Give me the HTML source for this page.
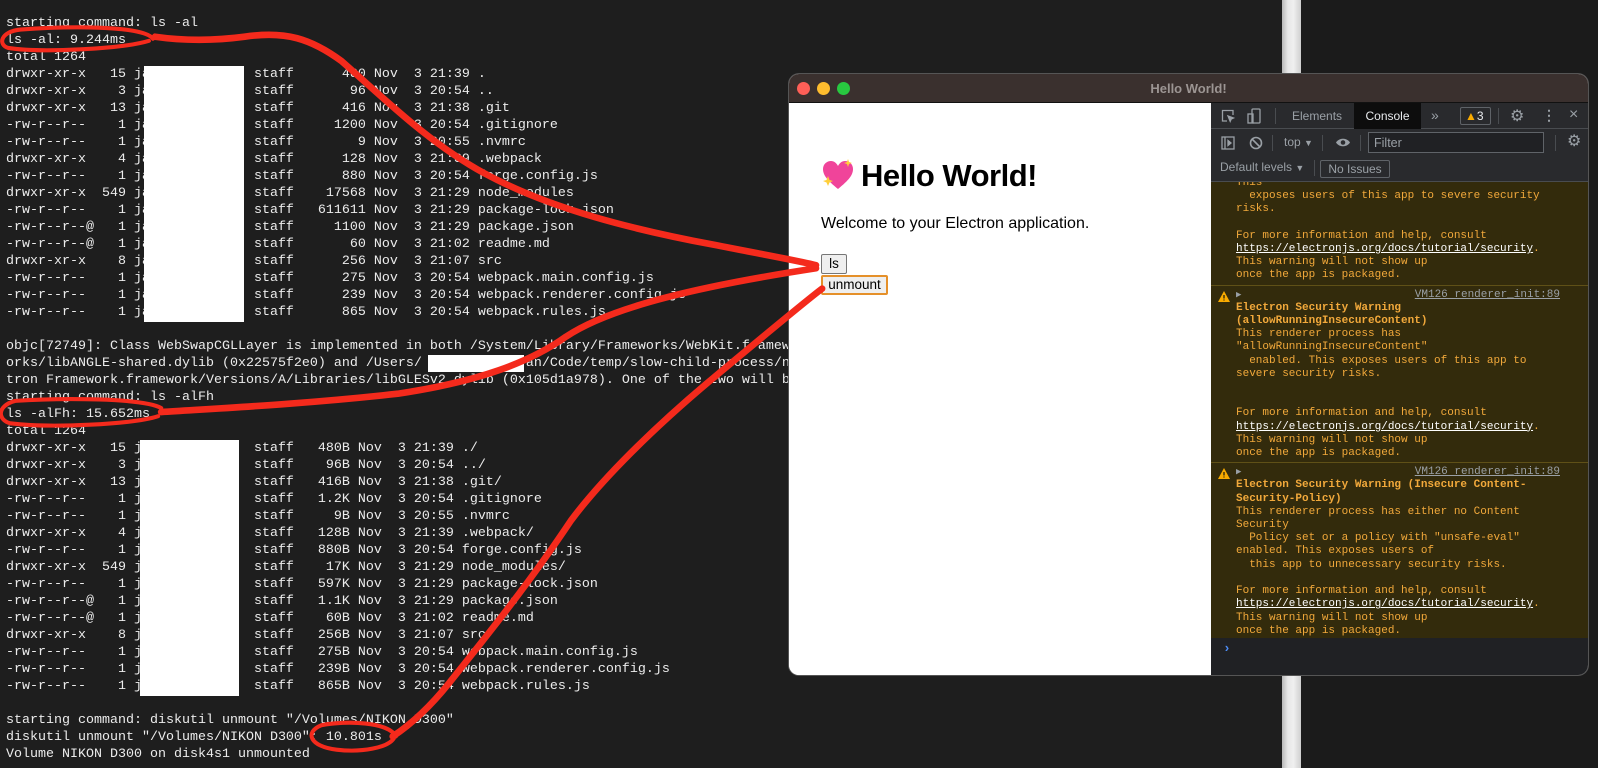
<!DOCTYPE html>
<html><head><meta charset="utf-8"><style>
*{margin:0;padding:0;box-sizing:border-box}
html,body{width:1598px;height:768px;overflow:hidden;background:#1e1e1e;position:relative}
.term{position:absolute;left:6px;top:15px;font:13.33px/17px "Liberation Mono",monospace;color:#ececec;white-space:pre;letter-spacing:0}
.wb{position:absolute;background:#fff}
.strip{position:absolute;left:1282px;top:0;width:19px;height:768px;background:linear-gradient(90deg,#b8b8b8,#e6e6e6 30%,#f0f0f0 60%,#cfcfcf)}
.right{position:absolute;left:1301px;top:0;width:297px;height:768px;background:#1b1b1b}
.win{position:absolute;left:789px;top:74px;width:799px;height:601px;border-radius:10px;overflow:hidden;background:#fff;box-shadow:0 0 0 1px #555}
.tb{position:absolute;left:0;top:0;width:799px;height:29px;background:#3a302e;border-bottom:1px solid #111}
.tl{position:absolute;top:8px;width:13px;height:13px;border-radius:50%}
.title{position:absolute;left:0;width:799px;top:7px;text-align:center;font:bold 13px "Liberation Sans",sans-serif;color:#9c9593}
.content{position:absolute;left:0;top:29px;width:422px;height:572px;background:#fff;font-family:"Liberation Sans",sans-serif}
h1{position:absolute;left:72px;top:55px;font:bold 31px "Liberation Sans",sans-serif;color:#000;letter-spacing:-0.5px}
.wel{position:absolute;left:32px;top:112px;font:16px "Liberation Sans",sans-serif;color:#000}
.btn{position:absolute;background:#efefef;border:1px solid #767676;border-radius:2px;font:13.5px "Liberation Sans",sans-serif;color:#000;text-align:center}
.dt{position:absolute;left:422px;top:29px;width:377px;height:572px;background:#202124;font-family:"Liberation Sans",sans-serif;color:#9aa0a6;font-size:12px}
.bar{position:absolute;left:0;width:377px;background:#292a2d;border-bottom:1px solid #494c50}
.sep{position:absolute;width:1px;height:16px;background:#494c50}
.msgs{position:absolute;left:0;top:79px;width:377px;height:456px;overflow:hidden;background:#332b0c;font:11px/13.2px "Liberation Mono",monospace;color:#f2a93b;white-space:pre}
.m{position:relative;border-top:1px solid #5f5017;padding:3px 0 2px 25px}
.m b{font-weight:bold}
.lk{color:#fff;text-decoration:underline}
.src{position:absolute;right:28px;top:3px;color:#9aa0a6;text-decoration:underline}
.wi{position:absolute;left:7px;top:5px}
.ar{position:absolute;left:25px;top:3px;color:#9aa0a6;font-size:9px}
</style></head><body>
<div class="term">starting command: ls -al
ls -al: 9.244ms
total 1264
drwxr-xr-x   15 ja             staff      480 Nov  3 21:39 .
drwxr-xr-x    3 ja             staff       96 Nov  3 20:54 ..
drwxr-xr-x   13 ja             staff      416 Nov  3 21:38 .git
-rw-r--r--    1 ja             staff     1200 Nov  3 20:54 .gitignore
-rw-r--r--    1 ja             staff        9 Nov  3 20:55 .nvmrc
drwxr-xr-x    4 ja             staff      128 Nov  3 21:39 .webpack
-rw-r--r--    1 ja             staff      880 Nov  3 20:54 forge.config.js
drwxr-xr-x  549 ja             staff    17568 Nov  3 21:29 node_modules
-rw-r--r--    1 ja             staff   611611 Nov  3 21:29 package-lock.json
-rw-r--r--@   1 ja             staff     1100 Nov  3 21:29 package.json
-rw-r--r--@   1 ja             staff       60 Nov  3 21:02 readme.md
drwxr-xr-x    8 ja             staff      256 Nov  3 21:07 src
-rw-r--r--    1 ja             staff      275 Nov  3 20:54 webpack.main.config.js
-rw-r--r--    1 ja             staff      239 Nov  3 20:54 webpack.renderer.config.js
-rw-r--r--    1 ja             staff      865 Nov  3 20:54 webpack.rules.js

objc[72749]: Class WebSwapCGLLayer is implemented in both /System/Library/Frameworks/WebKit.framework/Versions/A/Frameworks/WebCore.framew
orks/libANGLE-shared.dylib (0x22575f2e0) and /Users/            van/Code/temp/slow-child-process/node_modules/electron/dist/Electron.app/Elec
tron Framework.framework/Versions/A/Libraries/libGLESv2.dylib (0x105d1a978). One of the two will be used. Which one is undefined.
starting command: ls -alFh
ls -alFh: 15.652ms
total 1264
drwxr-xr-x   15 j              staff   480B Nov  3 21:39 ./
drwxr-xr-x    3 j              staff    96B Nov  3 20:54 ../
drwxr-xr-x   13 j              staff   416B Nov  3 21:38 .git/
-rw-r--r--    1 j              staff   1.2K Nov  3 20:54 .gitignore
-rw-r--r--    1 j              staff     9B Nov  3 20:55 .nvmrc
drwxr-xr-x    4 j              staff   128B Nov  3 21:39 .webpack/
-rw-r--r--    1 j              staff   880B Nov  3 20:54 forge.config.js
drwxr-xr-x  549 j              staff    17K Nov  3 21:29 node_modules/
-rw-r--r--    1 j              staff   597K Nov  3 21:29 package-lock.json
-rw-r--r--@   1 j              staff   1.1K Nov  3 21:29 package.json
-rw-r--r--@   1 j              staff    60B Nov  3 21:02 readme.md
drwxr-xr-x    8 j              staff   256B Nov  3 21:07 src/
-rw-r--r--    1 j              staff   275B Nov  3 20:54 webpack.main.config.js
-rw-r--r--    1 j              staff   239B Nov  3 20:54 webpack.renderer.config.js
-rw-r--r--    1 j              staff   865B Nov  3 20:54 webpack.rules.js

starting command: diskutil unmount "/Volumes/NIKON D300"
diskutil unmount "/Volumes/NIKON D300": 10.801s
Volume NIKON D300 on disk4s1 unmounted</div>
<div class="wb" style="left:144px;top:66px;width:100px;height:256px"></div>
<div class="wb" style="left:140px;top:440px;width:99px;height:256px"></div>
<div class="wb" style="left:428px;top:355px;width:96px;height:17px"></div>
<div class="strip"></div><div class="right"></div>

<div class="win">
 <div class="tb">
  <div class="tl" style="left:8px;background:#fe5f57"></div>
  <div class="tl" style="left:28px;background:#febc2e"></div>
  <div class="tl" style="left:48px;background:#28c840"></div>
  <div class="title">Hello World!</div>
 </div>
 <div class="content">
  <svg style="position:absolute;left:32px;top:55px" width="34" height="34" viewBox="0 0 34 34">
   <path d="M17 31 C6 22 2 17 2 11 C2 6 6 3 10 3 C13 3 15.5 5 17 8 C18.5 5 21 3 24 3 C28 3 32 6 32 11 C32 17 28 22 17 31Z" fill="#f0449a"/>
   <path d="M7 18 L8.5 22 L12 23 L8.5 24.5 L7 28 L5.5 24.5 L2 23 L5.5 22Z" fill="#ffcf3a"/>
   <path d="M27 1 L28 4 L31 5 L28 6 L27 9 L26 6 L23 5 L26 4Z" fill="#ffcf3a"/>
  </svg>
  <h1>Hello World!</h1>
  <div class="wel">Welcome to your Electron application.</div>
  <div class="btn" style="left:32px;top:151px;width:26px;height:20px;line-height:18px">ls</div>
  <div class="btn" style="left:32px;top:172px;width:67px;height:20px;line-height:16px;border:2px solid #e5902a">unmount</div>
 </div>
 <div class="dt">
  <div class="bar" style="top:0;height:26px">
   <svg style="position:absolute;left:10px;top:6px" width="14" height="14" viewBox="0 0 14 14" fill="none" stroke="#9aa0a6" stroke-width="1.3"><path d="M6 12H1.5V1.5H12V6"/><path d="M7 7l5.5 2-2.3 1 -1 2.3z" fill="#9aa0a6"/></svg>
   <svg style="position:absolute;left:36px;top:5px" width="14" height="16" viewBox="0 0 14 16" fill="none" stroke="#9aa0a6" stroke-width="1.3"><rect x="5" y="1" width="8" height="14" rx="1"/><rect x="1" y="6" width="5" height="9"/></svg>
   <div class="sep" style="left:64px;top:5px"></div>
   <div style="position:absolute;left:81px;top:6px">Elements</div>
   <div style="position:absolute;left:143px;top:0;width:67px;height:26px;background:#0d0d0d;color:#e8eaed;text-align:center;line-height:26px">Console</div>
   <div style="position:absolute;left:220px;top:4px;font-size:14px">»</div>
   <div style="position:absolute;left:249px;top:4px;width:31px;height:18px;border:1px solid #5f6368;border-radius:2px;color:#e8eaed;line-height:16px;padding-left:4px"><span style="color:#f9ab00">▲</span>3</div>
   <div class="sep" style="left:287px;top:5px"></div>
   <div style="position:absolute;left:299px;top:3px;font-size:16px;color:#9aa0a6">⚙</div>
   <div style="position:absolute;left:331px;top:4px;font-size:14px;font-weight:bold">⋮</div>
   <div style="position:absolute;left:358px;top:3px;font-size:16px">×</div>
  </div>
  <div class="bar" style="top:26px;height:53px">
   <svg style="position:absolute;left:10px;top:7px" width="14" height="14" viewBox="0 0 14 14" fill="none" stroke="#9aa0a6" stroke-width="1.3"><rect x="1" y="1" width="12" height="12"/><path d="M4 1v12"/><path d="M7 4.5l3 2.5-3 2.5z" fill="#9aa0a6"/></svg>
   <svg style="position:absolute;left:38px;top:7px" width="14" height="14" viewBox="0 0 14 14" fill="none" stroke="#9aa0a6" stroke-width="1.6"><circle cx="7" cy="7" r="5.5"/><path d="M3 3l8 8"/></svg>
   <div class="sep" style="left:61px;top:6px"></div>
   <div style="position:absolute;left:73px;top:6px">top <span style="font-size:9px">▼</span></div>
   <div class="sep" style="left:111px;top:6px"></div>
   <svg style="position:absolute;left:124px;top:8px" width="16" height="11" viewBox="0 0 16 11"><path d="M1 5.5C4 0.5 12 0.5 15 5.5C12 10.5 4 10.5 1 5.5Z" fill="#9aa0a6"/><circle cx="8" cy="5.5" r="2.3" fill="#292a2d"/></svg>
   <div class="sep" style="left:149px;top:6px"></div>
   <div style="position:absolute;left:157px;top:3px;width:176px;height:21px;border:1px solid #5f6368;background:#202124;padding:3px 0 0 5px;font-size:12.5px">Filter</div>
   <div class="sep" style="left:344px;top:6px"></div>
   <div style="position:absolute;left:356px;top:2px;font-size:16px">⚙</div>
   <div style="position:absolute;left:9px;top:31px">Default levels <span style="font-size:9px">▼</span></div>
   <div class="sep" style="left:103px;top:31px"></div>
   <div style="position:absolute;left:109px;top:31px;width:70px;height:18px;border:1px solid #5f6368;border-radius:2px;text-align:center;line-height:16px">No Issues</div>
  </div>
  <div class="msgs"><div style="position:relative;top:-5px"><div class="m" style="border-top:none;padding-top:0">This
  exposes users of this app to severe security
risks.

For more information and help, consult
<span class="lk">https://electronjs.org/docs/tutorial/security</span>.
This warning will not show up
once the app is packaged.</div><div class="m"><svg class="wi" width="12" height="11" viewBox="0 0 12 11"><path d="M6 0L12 11H0Z" fill="#f9ab00"/><path d="M6 4v3.5M6 8.5v1" stroke="#332b0c" stroke-width="1.4"/></svg><span class="ar">▶</span><span class="src">VM126 renderer_init:89</span>
<b>Electron Security Warning</b>
<b>(allowRunningInsecureContent)</b>
This renderer process has
"allowRunningInsecureContent"
  enabled. This exposes users of this app to
severe security risks.


For more information and help, consult
<span class="lk">https://electronjs.org/docs/tutorial/security</span>.
This warning will not show up
once the app is packaged.</div><div class="m"><svg class="wi" width="12" height="11" viewBox="0 0 12 11"><path d="M6 0L12 11H0Z" fill="#f9ab00"/><path d="M6 4v3.5M6 8.5v1" stroke="#332b0c" stroke-width="1.4"/></svg><span class="ar">▶</span><span class="src">VM126 renderer_init:89</span>
<b>Electron Security Warning (Insecure Content-</b>
<b>Security-Policy)</b>
This renderer process has either no Content
Security
  Policy set or a policy with "unsafe-eval"
enabled. This exposes users of
  this app to unnecessary security risks.

For more information and help, consult
<span class="lk">https://electronjs.org/docs/tutorial/security</span>.
This warning will not show up
once the app is packaged.</div><div style="border-top:1px solid #5f5017"></div></div></div>
  <div style="position:absolute;left:12px;top:538px;color:#4d8df6;font:bold 13px 'Liberation Mono',monospace">›</div>
 </div>
</div>

<svg style="position:absolute;left:0;top:0" width="1598" height="768" viewBox="0 0 1598 768">
<g transform="scale(1.02)" fill="none" stroke="#f42a1c" stroke-width="6.5" stroke-linecap="round">
<path d="M150,38 C140,24 60,26 20,29 C0,31 -2,44 8,47 C40,52 120,48 146,40" stroke-width="4"/>
<path d="M152,36 C180,40 210,40 240,36 C280,30 305,38 335,60 C375,95 420,140 475,170 C540,205 620,225 700,240 C740,248 780,255 800,260"/>
<path d="M158,400 C140,390 60,390 15,393 C-4,398 -2,412 10,415 C50,420 130,416 155,408" stroke-width="4"/>
<path d="M158,404 C220,400 300,396 390,386 C470,374 520,355 555,330 C600,300 690,280 800,263"/>
<path d="M806,283 C790,295 760,320 700,370 C640,420 590,470 560,510 C520,570 480,620 440,670 C420,695 400,712 385,722"/>
<path d="M388,722 C382,708 340,706 315,711 C298,718 304,732 330,735 C355,738 380,733 386,724" stroke-width="4"/>
</g></svg>
</body></html>
